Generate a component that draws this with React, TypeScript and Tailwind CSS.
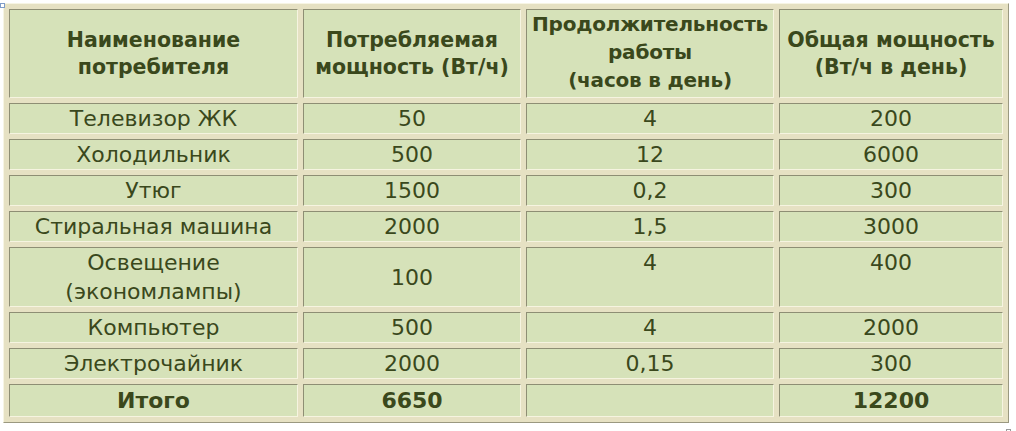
import React from "react";

type Row = {
  name: React.ReactNode;
  power: string;
  hours: string;
  total: string;
  h: string;
  topAlign?: boolean;
  bold?: boolean;
};

const rows: Row[] = [
  { name: "Телевизор ЖК", power: "50", hours: "4", total: "200", h: "h-[31px]" },
  { name: "Холодильник", power: "500", hours: "12", total: "6000", h: "h-[31px]" },
  { name: "Утюг", power: "1500", hours: "0,2", total: "300", h: "h-[31px]" },
  { name: "Стиральная машина", power: "2000", hours: "1,5", total: "3000", h: "h-[31px]" },
  {
    name: (
      <>
        Освещение
        <br />
        (экономлампы)
      </>
    ),
    power: "100",
    hours: "4",
    total: "400",
    h: "h-[60px]",
    topAlign: true,
  },
  { name: "Компьютер", power: "500", hours: "4", total: "2000", h: "h-[31px]" },
  { name: "Электрочайник", power: "2000", hours: "0,15", total: "300", h: "h-[31px]" },
  { name: "Итого", power: "6650", hours: "", total: "12200", h: "h-[33px]", bold: true },
];

const cell =
  "border border-t-[#8e8e74] border-l-[#8e8e74] border-b-[#f6f4e0] border-r-[#f6f4e0] bg-[#d6e2b9] text-center p-0";

export default function App() {
  return (
    <div className="relative min-h-[431px] w-[1016px] bg-white font-['DejaVu_Sans',sans-serif] text-[#3a481c]">
      <div className="absolute left-0 top-0 h-[5px] w-[5px] border border-[#7f9cc8] bg-white" />
      <table className="ml-[3px] mt-[3px] w-[1006px] table-fixed border-separate border-spacing-[5px] border border-t-[#f7f5e4] border-l-[#f7f5e4] border-b-[#9a9880] border-r-[#9a9880] bg-[#e6e1c3]">
        <thead>
          <tr>
            <th className={`${cell} h-[89px] w-[289px] text-[20.5px] font-bold leading-[27px]`}>
              Наименование
              <br />
              потребителя
            </th>
            <th className={`${cell} h-[89px] w-[218px] text-[20.5px] font-bold leading-[27px]`}>
              Потребляемая
              <br />
              мощность (Вт/ч)
            </th>
            <th className={`${cell} h-[89px] w-[248px] align-top pt-0 text-[20px] font-bold leading-[28px] tracking-[-0.2px]`}>
              Продолжительность
              <br />
              работы
              <br />
              (часов в день)
            </th>
            <th className={`${cell} h-[89px] w-[224px] text-[20.5px] font-bold leading-[27px]`}>
              Общая мощность
              <br />
              (Вт/ч в день)
            </th>
          </tr>
        </thead>
        <tbody className="text-[22px] leading-[29px]">
          {rows.map((r, i) => (
            <tr key={i}>
              <td className={`${cell} ${r.h} ${r.bold ? "font-bold" : ""}`}>{r.name}</td>
              <td className={`${cell} ${r.h} ${r.bold ? "font-bold" : ""}`}>{r.power}</td>
              <td className={`${cell} ${r.h} ${r.topAlign ? "align-top" : ""}`}>{r.hours}</td>
              <td className={`${cell} ${r.h} ${r.topAlign ? "align-top" : ""} ${r.bold ? "font-bold" : ""}`}>
                {r.total}
              </td>
            </tr>
          ))}
        </tbody>
      </table>
      <div className="absolute left-[1006px] top-[426px] h-[5px] w-[5px] border border-[#9a9a9a] bg-white" />
    </div>
  );
}
